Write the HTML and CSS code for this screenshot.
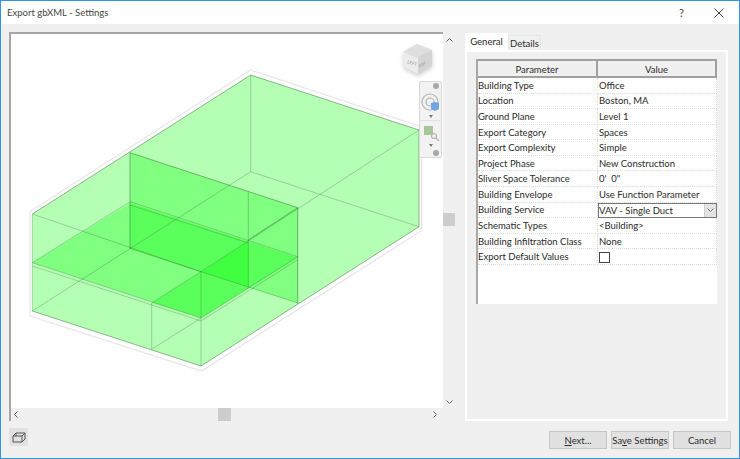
FILE: index.html
```html
<!DOCTYPE html>
<html lang="en">
<head>
<meta charset="utf-8">
<title>Export gbXML - Settings</title>
<link rel="stylesheet" href="styles.css">
</head>
<body>
<div class="window">
  <header class="titlebar">
    <span class="title">Export gbXML - Settings</span>
    <span class="help">?</span>
    <svg class="close" width="10" height="10" viewBox="0 0 10 10"><path d="M.5.5l9 9M9.5.5l-9 9" stroke="#444" fill="none"/></svg>
  </header>
  <main class="main">
    <section class="left">
      <div class="viewer">
        <div class="canvas">
          <svg class="model" width="432" height="374" viewBox="11 34 432 374">
            <g class="outline">
              <path d="M250.7 70L421.7 127V230.5L201.5 371L30 316V211.5Z"/>
            </g>
            <g class="faces">
              <path d="M250.7 75L419 130V226.7L201 366L32.3 311V214Z"/>
              <path d="M130 152.7L297.7 207.7V303.3L130 248.5Z"/>
              <path d="M32.3 262.7L130 203L297.7 257.5L201 318Z"/>
              <path d="M151.7 303L201 272L248.3 288.3L201 318Z"/>
              <path d="M201 272L248.3 241.5V288.3Z"/>
            </g>
            <g class="edges">
              <path d="M250.7 75V171.7M250.7 171.7L32.3 311M250.7 171.7L419 226.7M419 130L201 271.7L151.7 303"/>
              <path d="M32.3 214L201 271.7L298 303M32.3 262.7L201 318L297.7 256.7L130 201.7L32.3 262.7M32.3 266L201 321L297.7 259.7M130 205L248.3 243"/>
              <path d="M130 248.5L201 271.7M201 271.7V366M248.3 191.7V288.3M151.7 303V349.3L201 318M32.3 214V311"/>
            </g>
            <g class="edges strong">
              <path d="M250.7 75L419 130V226.7L201 366L32.3 311M32.3 214L250.7 75M130 152.7L297.7 207.7V303.3M130 152.7V248.5M297.7 207.7L248.3 240"/>
            </g>
          </svg>
          <svg class="cube" width="34" height="36" viewBox="0 0 34 36">
            <path class="cube-top" d="M16 1L31 7L17 15L2 9Z"/>
            <path class="cube-left" d="M2 9L17 15V31L3 24Z"/>
            <path class="cube-right" d="M17 15L31 7V23L17 31Z"/>
            <text class="cube-label" x="6" y="20" transform="rotate(18 6 20)">LEFT</text>
            <text class="cube-label" x="19" y="25" transform="rotate(-30 19 25)">FRT</text>
          </svg>
          <div class="navbar">
            <span class="nav-dot"></span>
            <svg class="nav-icon" width="20" height="22" viewBox="0 0 20 22">
              <circle class="wheel" cx="9" cy="10" r="8"/>
              <circle class="wheel" cx="9" cy="10" r="4"/>
              <path class="mini-cube" d="M10 11l4-1 4 1v6l-4 2-4-2z"/>
            </svg>
            <span class="caret"></span>
            <span class="nav-sep"></span>
            <svg class="nav-icon" width="20" height="17" viewBox="0 0 20 17">
              <rect class="zoom-sq" x="3" y="1" width="9" height="9"/>
              <circle class="wheel" cx="13" cy="11" r="2.5"/>
              <path class="wheel" d="M15 13l3 3"/>
            </svg>
            <span class="caret second"></span>
            <span class="nav-dot bottom"></span>
          </div>
        </div>
        <div class="vscroll">
          <svg width="7" height="4" viewBox="0 0 7 4"><path d="M.5 3.5l3-3 3 3" fill="none" stroke="#666"/></svg>
          <span class="thumb"></span>
          <svg width="7" height="4" viewBox="0 0 7 4"><path d="M.5.5l3 3 3-3" fill="none" stroke="#666"/></svg>
        </div>
        <div class="hscroll">
          <svg width="4" height="7" viewBox="0 0 4 7"><path d="M3.5.5l-3 3 3 3" fill="none" stroke="#666"/></svg>
          <span class="thumb"></span>
          <svg width="4" height="7" viewBox="0 0 4 7"><path d="M.5.5l3 3-3 3" fill="none" stroke="#666"/></svg>
        </div>
      </div>
      <div class="footer">
        <span class="icon-btn">
          <svg width="14" height="12" viewBox="0 0 14 12"><path d="M1 5h9v6H1zM1 5l3-3h9v6l-3 3M10 5l3-3M4 2v3" fill="none" stroke="#555"/></svg>
        </span>
      </div>
    </section>
    <section class="right">
      <nav class="tabs">
        <span class="tab active">General</span>
        <span class="tab">Details</span>
      </nav>
      <div class="panel">
        <div class="grid">
          <div class="head">Parameter</div><div class="head">Value</div>
          <div class="cell">Building Type</div><div class="cell val">Office</div>
          <div class="cell">Location</div><div class="cell val">Boston, MA</div>
          <div class="cell">Ground Plane</div><div class="cell val">Level 1</div>
          <div class="cell">Export Category</div><div class="cell val">Spaces</div>
          <div class="cell">Export Complexity</div><div class="cell val">Simple</div>
          <div class="cell">Project Phase</div><div class="cell val">New Construction</div>
          <div class="cell">Sliver Space Tolerance</div><div class="cell val">0'&nbsp; 0"</div>
          <div class="cell">Building Envelope</div><div class="cell val">Use Function Parameter</div>
          <div class="cell">Building Service</div>
          <div class="cell val select">VAV - Single Duct<span class="drop"><svg width="7" height="4" viewBox="0 0 7 4"><path d="M.5.5l3 3 3-3" fill="none" stroke="#777"/></svg></span></div>
          <div class="cell">Schematic Types</div><div class="cell val">&lt;Building&gt;</div>
          <div class="cell">Building Infiltration Class</div><div class="cell val">None</div>
          <div class="cell">Export Default Values</div><div class="cell val"><span class="check"></span></div>
        </div>
      </div>
      <div class="buttons">
        <button class="btn"><u>N</u>ext...</button>
        <button class="btn">Sa<u>v</u>e Settings</button>
        <button class="btn">Cancel</button>
      </div>
    </section>
  </main>
</div>
</body>
</html>
```

FILE: styles.css
```css
* { box-sizing: border-box; }
html, body { margin: 0; padding: 0; }
body { width: 740px; height: 459px; overflow: hidden; font-family: "Lato", "Noto Sans", sans-serif; font-size: 9.5px; color: #2a2a2a; }
.window { width: 740px; height: 459px; border: 1px solid #2f93e6; background: #f0f0f0; display: flex; flex-direction: column; }
.titlebar { height: 23px; flex: none; background: #fff; display: flex; align-items: center; padding-left: 6px; }
.title { font-size: 9.5px; color: #444; flex: 1; }
.help { font-size: 11px; color: #444; margin-right: 30px; }
.close { margin-right: 15px; }
.main { flex: 1; display: flex; padding: 8px 0 0 8px; }
.left { width: 446px; flex: none; display: flex; flex-direction: column; }
.viewer { width: 446px; height: 389px; display: grid; grid-template-columns: 434px 12px; grid-template-rows: 376px 13px; }
.canvas { position: relative; background: #fff; border-left: 2px solid #a6a6a6; border-top: 2px solid #a6a6a6; }
.model { display: block; }
.outline path { fill: none; stroke: #e6e6e6; stroke-width: 1.2; }
.faces path { fill: rgba(0, 255, 0, .29); }
.edges path { fill: none; stroke: rgba(40, 90, 40, .3); stroke-width: .9; }
.edges.strong path { stroke: rgba(40, 90, 40, .5); }
.cube { position: absolute; left: 390px; top: 9px; filter: drop-shadow(0 2px 2px rgba(0,0,0,.2)); }
.cube-top { fill: #dedede; }
.cube-left { fill: #ececec; }
.cube-right { fill: #d4d4d4; }
.cube-label { font-size: 4.5px; fill: #999; }
.navbar { position: absolute; left: 408px; top: 47px; width: 23px; height: 77px; background: #f2f2f2; border: 1px solid #d8d8d8; border-radius: 2px; display: flex; flex-direction: column; align-items: center; padding-top: 10px; }
.nav-icon { flex: none; }
.nav-dot { position: absolute; right: 2px; top: 1px; width: 6px; height: 6px; border-radius: 50%; background: #a8a8a8; }
.nav-dot.bottom { top: auto; bottom: 1px; }
.wheel { fill: none; stroke: #b4b4b4; stroke-width: 1.2; }
.mini-cube { fill: #6fa6e0; }
.zoom-sq { fill: #a5c795; }
.caret { width: 0; height: 0; border: 2.5px solid transparent; border-top: 3px solid #777; margin-top: 1px; flex: none; }
.caret.second { margin-top: 2px; }
.nav-sep { width: 19px; height: 1px; background: #e0e0e0; margin: 0 0 4px; flex: none; }
.vscroll { display: flex; flex-direction: column; align-items: center; justify-content: space-between; padding: 6px 0 4px; grid-row: 1; grid-column: 2; height: 376px; }
.vscroll .thumb { width: 12px; height: 13px; background: #cdcdcd; margin-top: -3px; }
.hscroll { grid-row: 2; grid-column: 1; display: flex; align-items: center; justify-content: space-between; padding: 0 6px 0 3px; border-left: 2px solid #a6a6a6; }
.hscroll .thumb { width: 13px; height: 13px; background: #cdcdcd; margin-left: -3px; }
.footer { padding-top: 7px; }
.icon-btn { display: flex; width: 19px; height: 18px; background: #e1e1e1; align-items: center; justify-content: center; border-radius: 1px; }
.right { margin-left: 10px; width: 266px; flex: none; display: flex; flex-direction: column; }
.tabs { display: flex; align-items: flex-end; height: 17px; margin-top: 1px; }
.tab { height: 15px; width: 33px; border: 1px solid #e6e6e6; border-bottom: 0; line-height: 15px; text-align: center; }
.tab.active { height: 17px; width: 43px; background: #fff; border: 0; line-height: 18px; }
.panel { width: 263px; height: 371px; border: 2px solid #fff; padding: 7px 0 0 9px; }
.grid { width: 241px; height: 245px; background: #fff; border-left: 2px solid #a8a8a8; display: grid; grid-template-columns: 120px 119px; grid-auto-rows: 15.58px; grid-template-rows: 19px; align-content: start; }
.head { background: #f0f0f0; border: 1px solid #a0a0a0; border-width: 2px 2px 2px 0; text-align: center; line-height: 18px; }
.cell { border-bottom: 1px dotted #dcdcdc; border-right: 1px dotted #dcdcdc; padding: 1px 0 0 0; line-height: 14px; white-space: nowrap; display: flex; align-items: center; }
.val { padding-left: 1px; }
.select { position: relative; border: 1px solid #777; padding: 1px 0 0 0; }
.drop { position: absolute; right: 0; top: 0; bottom: 0; width: 12px; background: #e4e4e4; border-left: 1px solid #cfcfcf; display: flex; align-items: center; justify-content: center; }
.check { display: block; width: 11px; height: 11px; background: #fff; border: 1px solid #444; }
.buttons { display: flex; justify-content: flex-end; gap: 4px; margin-top: 10px; }
.btn { width: 58px; height: 18px; padding: 1px 0 0; background: #e1e1e1; border: 1px solid #c6c6c6; font: inherit; color: #2a2a2a; white-space: nowrap; }
```
